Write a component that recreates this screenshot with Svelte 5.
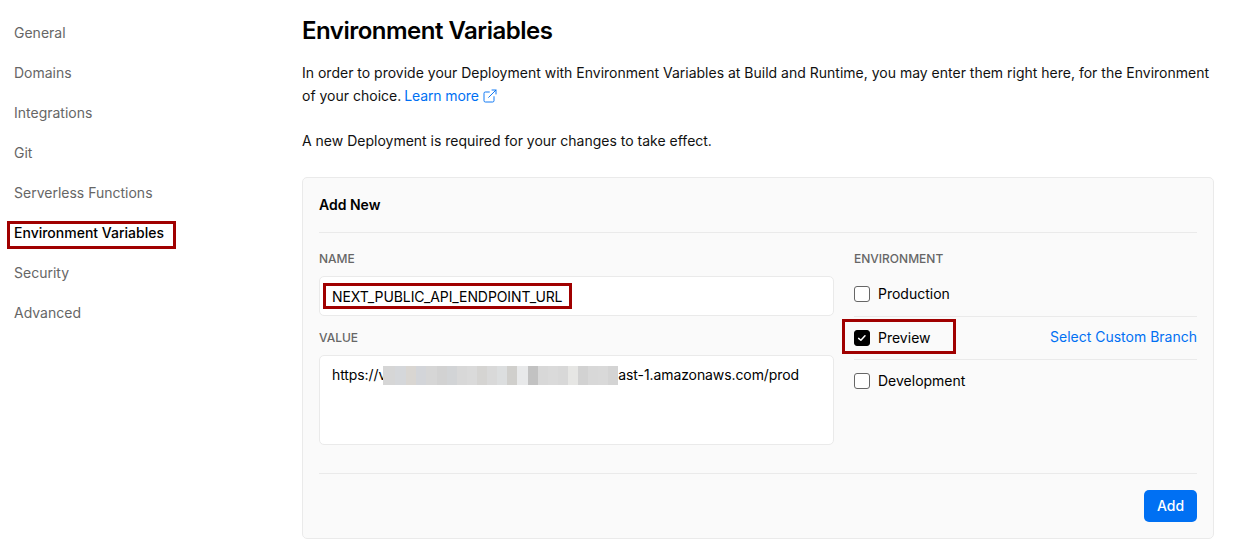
<script>
  const navItems = ['General', 'Domains', 'Integrations', 'Git', 'Serverless Functions', 'Environment Variables', 'Security', 'Advanced'];
  const blurBlocks = [
    [12, '#d6d6d6'], [11, '#d5d7da'], [10, '#d9d6d2'], [10, '#d3d5d9'], [11, '#d6d6d6'], [10, '#d2d2d2'],
    [10, '#d2d4d6'], [10, '#d8d8d8'], [10, '#dadada'], [10, '#d5d4d2'], [10, '#d9d9d9'], [10, '#dcdedf'],
    [10, '#d0cfcc'], [11, '#e8e9ea'], [10, '#c2c2c2'], [10, '#d8d8d8'], [10, '#dadada'], [10, '#d8d8d8'],
    [10, '#e6e6e4'], [10, '#d2d2d2'], [10, '#d8d8d8'], [10, '#d9d9d9'], [10, '#d4d4d4']
  ];
</script>

<div class="page">
  <nav class="sidebar">
    {#each navItems as item}
      <a class="nav-item" class:active={item === 'Environment Variables'} href="#top">{item}</a>
    {/each}
  </nav>

  <main class="content">
    <h1>Environment Variables</h1>
    <p class="intro">
      In order to provide your Deployment with Environment Variables at Build and Runtime, you may enter them right here, for the Environment of your choice.
      <a class="link learn" href="#top">Learn more
        <svg class="ext" viewBox="0 0 24 24" width="16" height="16" fill="none" stroke="currentColor" stroke-width="1.4" stroke-linecap="round" stroke-linejoin="round"><path d="M18 13v6a2 2 0 0 1-2 2H5a2 2 0 0 1-2-2V8a2 2 0 0 1 2-2h6" /><path d="M15 3h6v6" /><path d="M10 14 21 3" /></svg>
      </a>
    </p>
    <p class="notice">A new Deployment is required for your changes to take effect.</p>

    <section class="card">
      <h2>Add New</h2>
      <div class="form">
        <div class="fields">
          <div class="label">NAME</div>
          <div class="input name">NEXT_PUBLIC_API_ENDPOINT_URL</div>
          <div class="label value-label">VALUE</div>
          <div class="input textarea">https://v<span class="blur">{#each blurBlocks as [w, c]}<i style="width:{w}px;background:{c}"></i>{/each}</span>ast-1.amazonaws.com/prod</div>
        </div>
        <div class="envs">
          <div class="label">ENVIRONMENT</div>
          <div class="env first"><span class="check"></span>Production</div>
          <div class="env preview">
            <span class="check checked">
              <svg viewBox="0 0 16 16" width="12" height="12" fill="none" stroke="#fff" stroke-width="2" stroke-linecap="round" stroke-linejoin="round"><path d="M3.5 8.5 6.5 11 12 5" /></svg>
            </span>Preview
            <a class="link branch" href="#top">Select Custom Branch</a>
          </div>
          <div class="env"><span class="check"></span>Development</div>
        </div>
      </div>
      <div class="footer"><button class="add">Add</button></div>
    </section>
  </main>
</div>

<style>
  :global(body) {
    margin: 0;
    background: #fff;
  }

  .page {
    display: flex;
    height: 556px;
    overflow: hidden;
    font-family: Inter, "Liberation Sans", sans-serif;
    font-size: 14px;
    line-height: 24px;
    color: #111;
  }

  .sidebar {
    width: 302px;
    flex-shrink: 0;
    padding: 13px 0 0 14px;
    box-sizing: border-box;
    display: flex;
    flex-direction: column;
  }

  .nav-item {
    position: relative;
    height: 40px;
    line-height: 40px;
    color: #666;
    text-decoration: none;
    align-self: flex-start;
  }

  .nav-item.active {
    color: #000;
    font-weight: 500;
  }

  /* annotation boxes drawn over the screenshot */
  .nav-item.active::after,
  .name::after,
  .preview::after {
    content: '';
    position: absolute;
    border: 3px solid #a00000;
    box-sizing: border-box;
    pointer-events: none;
  }

  .nav-item.active::after {
    left: -7px;
    top: 8px;
    width: 169px;
    height: 28px;
  }

  .content {
    width: 912px;
    flex-shrink: 0;
  }

  h1 {
    margin: 14px 0 0;
    font-size: 24px;
    line-height: 34px;
    font-weight: 600;
    color: #000;
    letter-spacing: -0.5px;
  }

  .intro {
    margin: 13px 0 0;
    line-height: 23px;
    color: #111;
  }

  .notice {
    margin: 22px 0 0;
    line-height: 23px;
  }

  .link {
    color: #0070f3;
    text-decoration: none;
  }

  .learn {
    margin-left: -1px;
    letter-spacing: -0.1px;
  }

  .ext {
    vertical-align: -3px;
    margin-left: -1px;
  }

  .card {
    margin-top: 25px;
    height: 362px;
    box-sizing: border-box;
    padding: 0 16px;
    background: #fafafa;
    border: 1px solid #eaeaea;
    border-radius: 5px;
  }

  h2 {
    margin: 0;
    height: 54px;
    line-height: 54px;
    font-size: 14px;
    font-weight: 600;
    color: #000;
    border-bottom: 1px solid #eaeaea;
  }

  .form {
    display: flex;
    gap: 20px;
    height: 240px;
    border-bottom: 1px solid #eaeaea;
  }

  .fields {
    width: 515px;
    padding-top: 14px;
  }

  .label {
    font-size: 12px;
    line-height: 24px;
    font-weight: 500;
    color: #666;
  }

  .value-label {
    margin-top: 10px;
  }

  .input {
    position: relative;
    height: 40px;
    margin-top: 5px;
    box-sizing: border-box;
    padding: 8px 12px;
    background: #fff;
    border: 1px solid #eaeaea;
    border-radius: 5px;
    color: #000;
    letter-spacing: -0.09px;
  }

  .textarea {
    height: 90px;
    padding-top: 7px;
  }

  .name::after {
    left: 3px;
    top: 6px;
    width: 249px;
    height: 26px;
  }

  .blur {
    display: inline-flex;
    height: 19px;
    vertical-align: -5px;
    margin-left: -3px;
  }

  .blur i {
    display: block;
  }

  .envs {
    flex: 1;
    padding-top: 14px;
  }

  .env {
    position: relative;
    display: flex;
    align-items: center;
    height: 43px;
    border-top: 1px solid #eaeaea;
    box-sizing: border-box;
    color: #000;
  }

  .env.first {
    border-top: none;
    height: 45px;
  }

  .check {
    display: flex;
    align-items: center;
    justify-content: center;
    width: 16px;
    height: 16px;
    margin-right: 8px;
    box-sizing: border-box;
    border: 1px solid #666;
    border-radius: 3px;
    background: #fff;
  }

  .checked {
    background: #000;
    border-color: #000;
  }

  .branch {
    margin-left: auto;
    padding-bottom: 2px;
  }

  .preview::after {
    left: -12px;
    top: 2px;
    width: 114px;
    height: 35px;
  }

  .footer {
    display: flex;
    justify-content: flex-end;
    padding-top: 16px;
  }

  .add {
    width: 53px;
    height: 32px;
    padding: 0 0 2px;
    border: none;
    border-radius: 5px;
    background: #0070f3;
    color: #fff;
    font: 500 14px Inter, "Liberation Sans", sans-serif;
  }
</style>
